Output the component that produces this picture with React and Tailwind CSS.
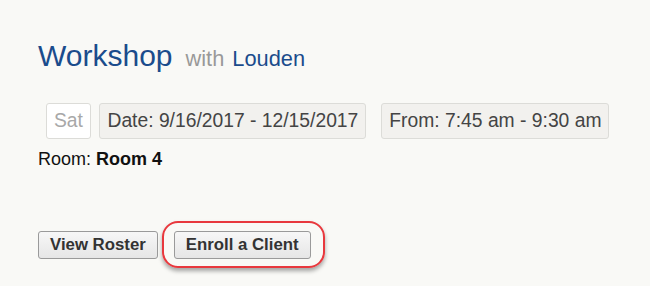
export default function App() {
  return (
    <div
      className="min-h-[286px] w-[650px] bg-[#f9f9f6] pl-[38px] pt-[38px]"
      style={{ fontFamily: '"Liberation Sans", Arial, sans-serif' }}
    >
      {/* title */}
      <div className="flex items-baseline leading-[36px]">
        <span className="text-[30px] text-[#1b4c8c]">Workshop</span>
        <span className="ml-[13px] text-[21.8px] text-[#999999]">with</span>
        <span className="ml-[8px] text-[21.8px] text-[#1b4c8c]">Louden</span>
      </div>

      {/* schedule chips */}
      <div className="mt-[26px] flex text-[19.3px] leading-[22px]">
        <span className="ml-[8px] rounded-[3px] border border-[#dcdcd8] bg-white px-[7px] py-[6px] text-[#a8a8a8]">
          Sat
        </span>
        <span className="ml-[8.5px] rounded-[3px] border border-[#dcdcd8] bg-[#f2f1ee] px-[7px] py-[6px] text-[#444]">
          Date: 9/16/2017 - 12/15/2017
        </span>
        <span className="ml-[15px] rounded-[3px] border border-[#dcdcd8] bg-[#f2f1ee] px-[7px] py-[6px] text-[#444]">
          From: 7:45 am - 9:30 am
        </span>
      </div>

      <div className="mt-[10px] text-[18px] leading-[20px] text-[#111]">
        Room: <span className="font-bold">Room 4</span>
      </div>

      {/* actions */}
      <div className="mt-[62px] flex items-start text-[16.8px] leading-[20px]">
        <button className="rounded-[3px] border border-[#9a9a9a] bg-gradient-to-b from-[#f7f7f7] to-[#e6e6e6] px-[11px] py-[3px] font-bold text-[#333]">
          View Roster
        </button>
        <div className="relative ml-4">
          <button className="rounded-[3px] border border-[#9a9a9a] bg-gradient-to-b from-[#f7f7f7] to-[#e6e6e6] px-[11px] py-[3px] font-bold text-[#333]">
            Enroll a Client
          </button>
          <span className="pointer-events-none absolute -bottom-[9px] -left-[12px] -right-[14px] -top-[10px] rounded-[16px] border-2 border-[#e8383d] shadow-[0_3px_4px_rgba(0,0,0,0.35)]" />
        </div>
      </div>
    </div>
  );
}
